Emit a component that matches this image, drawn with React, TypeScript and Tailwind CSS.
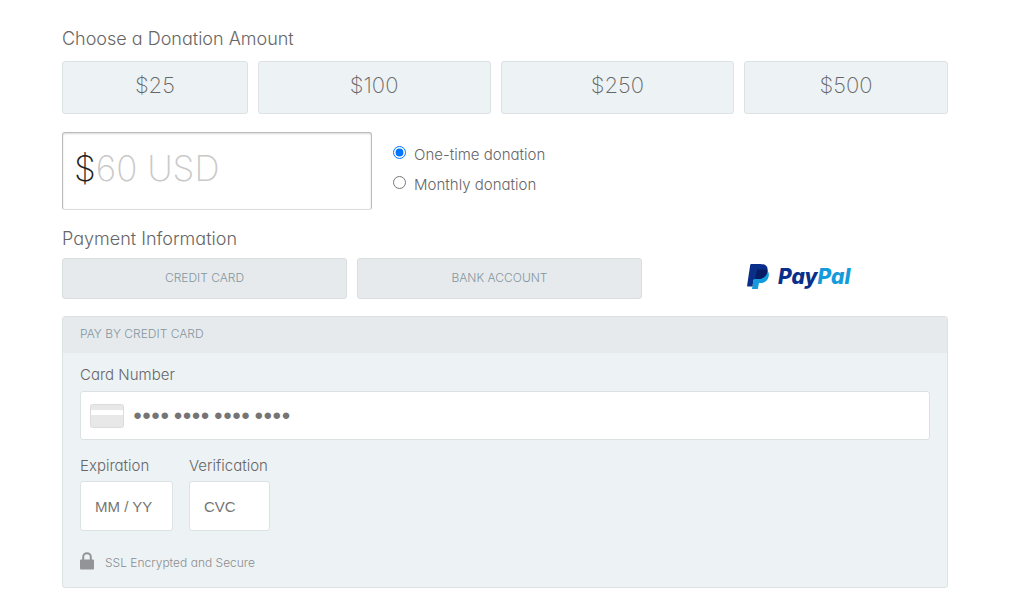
import React, { useState } from 'react';

const amounts = ['$25', '$100', '$250', '$500'];

const PayPalLogo: React.FC = () => (
  <svg width="106" height="30" viewBox="0 0 106 30" className="shrink-0" role="img" aria-label="PayPal">
    <path
      d="M8 8 H18 Q23 9 21.500 15 Q20 21 13.500 21 H12 L10.800 27 H5 Z"
      fill="#149bdc"
    />
    <path
      d="M4.200 2 H13 C18.500 2 21.300 4.300 20.500 9 C19.600 14.500 16 17 11 17 H8 C6.800 17 6.500 17.600 6.300 18.700 L5.500 24.500 H0.800 C0.200 24.500 0 24.200 0.100 23.600 L3.200 2.900 C3.300 2.300 3.600 2 4.200 2 Z"
      fill="#0a2f8a"
    />
    <path
      d="M10.200 7.500 H17.500 C19 7.500 20 7.700 20.500 8.300 C19.900 14 16.300 17 11 17 H8.200 Z"
      fill="#071c62"
    />
    <text x="31" y="22" fontFamily="Inter, sans-serif" fontSize="21" fontWeight="800" fontStyle="italic">
      <tspan fill="#0a2f8a">Pay</tspan>
      <tspan fill="#149bdc">Pal</tspan>
    </text>
  </svg>
);

const CardIcon: React.FC = () => (
  <svg width="34" height="24" viewBox="0 0 34 24" className="shrink-0" aria-hidden="true">
    <rect x="0.500" y="0.500" width="33" height="23" rx="2" fill="#e8e8e8" stroke="#dcdcdc" />
    <rect x="1" y="6" width="32" height="5" fill="#fff" />
  </svg>
);

const LockIcon: React.FC = () => (
  <svg width="14" height="18" viewBox="0 0 14 18" className="mb-1 shrink-0" aria-hidden="true">
    <path d="M3.200 8 V5 A3.800 3.800 0 0 1 10.800 5 V8" fill="none" stroke="#929497" strokeWidth="2" />
    <rect x="0" y="7.500" width="14" height="10" rx="1" fill="#929497" />
  </svg>
);

const Field: React.FC<{ id: string; label: string; placeholder: string; className: string }> = ({
  id,
  label,
  placeholder,
  className,
}) => (
  <div className="flex flex-col gap-[3px]">
    <label htmlFor={id} className="text-[15px] leading-6">
      {label}
    </label>
    <input
      id={id}
      placeholder={placeholder}
      className={`${className} h-[50px] rounded-[3px] border border-[#dce1e4] bg-white px-[14px] font-['Liberation_Sans',sans-serif] text-[15px] font-normal placeholder:text-[#757575]`}
    />
  </div>
);

export default function App() {
  const [frequency, setFrequency] = useState('once');

  return (
    <form className="bg-white pt-[27px] pr-[76px] pb-3 pl-[62px] font-[Inter,sans-serif] font-light text-[#666] [font-feature-settings:'cv11']">
      <h2 className="text-lg leading-6">Choose a Donation Amount</h2>
      <div className="mt-[10px] grid grid-cols-[186fr_233fr_234fr_204fr] gap-[10px]">
        {amounts.map((amount) => (
          <button
            key={amount}
            type="button"
            className="h-[53px] rounded-[3px] border border-[#dce1e4] bg-[#edf2f5] pb-1 text-[22px] font-extralight"
          >
            {amount}
          </button>
        ))}
      </div>

      <div className="mt-[18px] flex items-start gap-[21px]">
        <label className="flex h-[78px] w-[35%] items-center rounded-[3px] border border-[#bbb] border-b-[#ddd] px-[11px] pb-1.5 text-[35px] font-extralight text-[#222] shadow-[inset_0_1px_2px_rgba(0,0,0,0.15)]">
          $
          <input
            aria-label="Donation amount"
            placeholder="60 USD"
            className="w-full min-w-0 bg-transparent outline-none placeholder:text-[#c9c9c9]"
          />
        </label>
        <div className="flex flex-col gap-[6px] pt-[11px] text-[15px] leading-6">
          <label className="flex items-center gap-2">
            <input
              type="radio"
              name="frequency"
              className="mb-1.5 size-[13px]"
              checked={frequency === 'once'}
              onChange={() => setFrequency('once')}
            />
            One-time donation
          </label>
          <label className="flex items-center gap-2">
            <input
              type="radio"
              name="frequency"
              className="mb-1.5 size-[13px]"
              checked={frequency === 'monthly'}
              onChange={() => setFrequency('monthly')}
            />
            Monthly donation
          </label>
        </div>
      </div>

      <h2 className="mt-[17px] text-lg leading-6">Payment Information</h2>
      <div className="mt-[7px] grid grid-cols-[285fr_285fr_296fr] gap-[10px]">
        <button
          type="button"
          className="h-[41px] rounded-[3px] border border-[#d9dee0] bg-[#e6eaec] pb-0.5 text-xs text-[#8496a0]"
        >
          CREDIT CARD
        </button>
        <button
          type="button"
          className="h-[41px] rounded-[3px] border border-[#d9dee0] bg-[#e6eaec] pb-0.5 text-xs text-[#8496a0]"
        >
          BANK ACCOUNT
        </button>
        <button type="button" className="flex h-[41px] items-center justify-center pb-1">
          <PayPalLogo />
        </button>
      </div>

      <section className="mt-[17px] rounded-[3px] border border-[#dce1e4] bg-[#edf2f5]">
        <h3 className="bg-[#e6eaec] px-[17px] pt-[7px] pb-[9px] text-xs leading-5 text-[#8496a0]">
          PAY BY CREDIT CARD
        </h3>
        <div className="px-[17px] pt-[10px] pb-[13px]">
          <label htmlFor="card-number" className="block text-[15px] leading-6">
            Card Number
          </label>
          <div className="mt-1 flex h-[49px] items-center gap-[9px] rounded-[3px] border border-[#dce1e4] bg-white px-[9px]">
            <CardIcon />
            <input
              id="card-number"
              placeholder="●●●● ●●●● ●●●● ●●●●"
              className="w-full min-w-0 bg-transparent font-['Liberation_Sans',sans-serif] text-[15px] font-normal outline-none placeholder:text-[#757575]"
            />
          </div>
          <div className="mt-[14px] flex gap-4">
            <Field id="expiration" label="Expiration" placeholder="MM / YY" className="w-[93px]" />
            <Field id="verification" label="Verification" placeholder="CVC" className="w-[81px]" />
          </div>
          <p className="mt-[21px] flex items-center gap-[11px] text-xs leading-5 text-[#8b8d90]">
            <LockIcon />
            SSL Encrypted and Secure
          </p>
        </div>
      </section>
    </form>
  );
}
